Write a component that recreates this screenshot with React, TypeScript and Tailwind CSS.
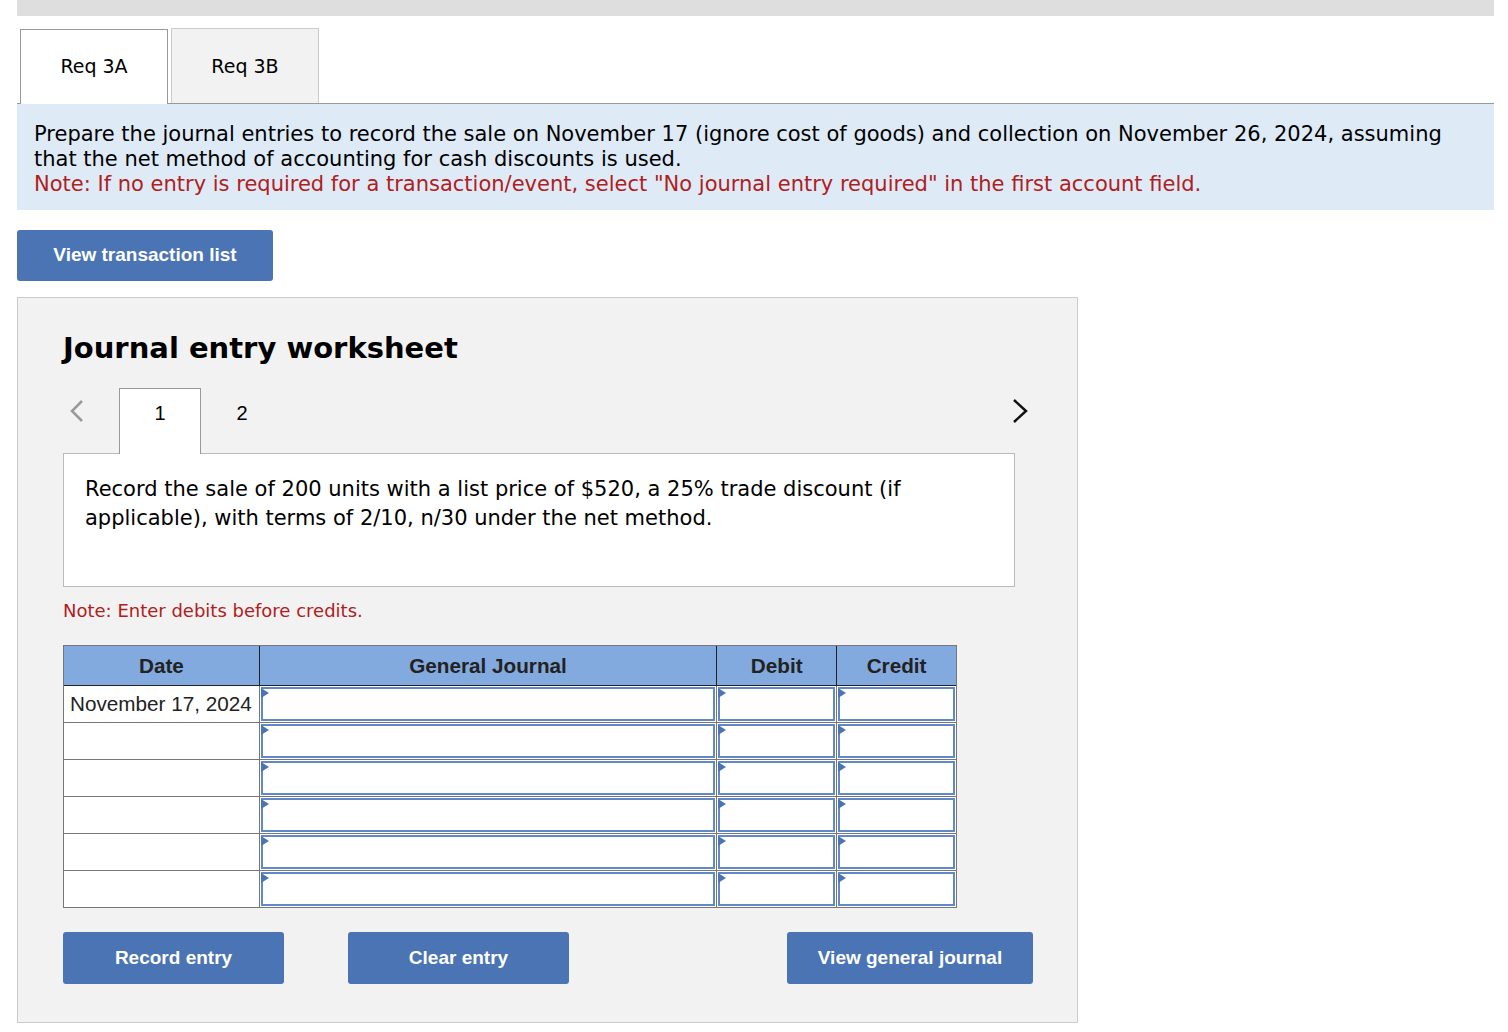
import React from "react";

const verdana = { fontFamily: '"DejaVu Sans", Verdana, sans-serif' };
const arial = { fontFamily: '"Liberation Sans", Arial, sans-serif' };

function InputCell({ w }: { w: string }) {
  return (
    <div className={`relative ${w} h-full border-l border-[#777] bg-white p-[1px]`}>
      <div className="h-full w-full border-2 border-[#6189c8] bg-white" />
      <div className="absolute left-[1px] top-[2px] h-0 w-0 border-y-[5px] border-l-[8px] border-y-transparent border-l-[#4a74b4]" />
    </div>
  );
}

function Row({ date }: { date?: string }) {
  return (
    <div className="flex h-[37px] border-t border-[#777]">
      <div className="flex w-[195px] items-center pl-[6px] text-[20.7px] text-[#222]">{date}</div>
      <InputCell w="w-[458px]" />
      <InputCell w="w-[120px]" />
      <InputCell w="w-[120px]" />
    </div>
  );
}

export default function App() {
  return (
    <div className="min-h-[1032px] w-[1508px] bg-white text-black" style={verdana}>
      <div className="ml-[17px] mr-[14px] h-[16px] bg-[#dedede]" />
      <div className="ml-[17px] mr-[14px] mt-[12px] flex items-end border-b border-[#999]">
        <div className="ml-[3px] flex h-[75px] w-[148px] items-center justify-center border border-b-0 border-[#999] bg-white text-[19px] text-black -mb-px pb-[1px]">
          Req 3A
        </div>
        <div className="ml-[3px] flex h-[75px] w-[148px] items-center justify-center border border-b-0 border-[#ccc] bg-[#f2f2f2] text-[19px]">
          Req 3B
        </div>
      </div>
      <div className="ml-[17px] mr-[14px] bg-[#deebf7] px-[17px] pt-[18px] pb-[13px] text-[21px] leading-[25px]">
        <div>
          Prepare the journal entries to record the sale on November 17 (ignore cost of goods) and collection on November 26, 2024, assuming that the net method of accounting for cash discounts is used.
        </div>
        <div className="text-[#b0201c]">
          Note: If no entry is required for a transaction/event, select "No journal entry required" in the first account field.
        </div>
      </div>
      <div className="ml-[17px] mt-[20px]">
        <button
          className="flex h-[51px] w-[256px] items-center justify-center rounded-[3px] bg-[#4a74b4] text-[19px] font-bold text-white"
          style={arial}
        >
          View transaction list
        </button>
      </div>
      <div className="ml-[17px] mt-[16px] h-[726px] w-[1061px] border border-[#ccc] bg-[#f2f2f2] pl-[45px] pt-[30px]">
        <div className="text-[29px] font-bold leading-[40px]">Journal entry worksheet</div>
        <div className="mt-[20px] flex h-[65px] w-[968px] items-start" style={arial}>
          <div className="flex h-[46px] w-[56px] items-center pl-[3px]">
            <svg width="20" height="26" viewBox="0 0 20 26">
              <path d="M16 3 L6 13 L16 23" fill="none" stroke="#999" strokeWidth="2.5" />
            </svg>
          </div>
          <div className="relative z-10 flex h-[66px] w-[82px] items-start justify-center border border-b-0 border-[#999] bg-white pt-[9px] text-[20px]">
            1
          </div>
          <div className="flex w-[82px] justify-center pt-[10px] text-[20px]">2</div>
          <div className="flex-1" />
          <div className="flex h-[46px] items-center">
            <svg width="20" height="26" viewBox="0 0 20 26">
              <path d="M3 2 L15 13 L3 24" fill="none" stroke="#111" strokeWidth="2.5" />
            </svg>
          </div>
        </div>
        <div className="h-[134px] w-[952px] border border-[#bbb] bg-white px-[21px] pt-[21px] text-[21px] leading-[29px]">
          Record the sale of 200 units with a list price of $520, a 25% trade discount (if applicable), with terms of 2/10, n/30 under the net method.
        </div>
        <div className="mt-[13px] text-[18px] leading-[22px] text-[#b0201c]">Note: Enter debits before credits.</div>
        <div className="mt-[23px] w-[894px] border border-[#777] bg-white" style={arial}>
          <div className="flex h-[39px] bg-[#83aadf] text-[20.7px] font-bold text-[#222]">
            <div className="flex w-[195px] items-center justify-center">Date</div>
            <div className="flex w-[458px] items-center justify-center border-l border-[#222]">General Journal</div>
            <div className="flex w-[120px] items-center justify-center border-l border-[#222]">Debit</div>
            <div className="flex w-[120px] items-center justify-center border-l border-[#222]">Credit</div>
          </div>
          <div className="border-t border-[#222]">
            <div className="flex h-[36px]">
              <div className="flex w-[195px] items-center pl-[6px] text-[20.7px] text-[#222]">November 17, 2024</div>
              <InputCell w="w-[458px]" />
              <InputCell w="w-[120px]" />
              <InputCell w="w-[120px]" />
            </div>
            <Row />
            <Row />
            <Row />
            <Row />
            <Row />
          </div>
        </div>
        <div className="mt-[24px] flex w-[970px] items-center" style={arial}>
          <button className="flex h-[52px] w-[221px] items-center justify-center rounded-[3px] bg-[#4a74b4] text-[19px] font-bold text-white">
            Record entry
          </button>
          <button className="ml-[64px] flex h-[52px] w-[221px] items-center justify-center rounded-[3px] bg-[#4a74b4] text-[19px] font-bold text-white">
            Clear entry
          </button>
          <button className="ml-[218px] flex h-[52px] w-[246px] items-center justify-center rounded-[3px] bg-[#4a74b4] text-[19px] font-bold text-white">
            View general journal
          </button>
        </div>
      </div>
    </div>
  );
}
